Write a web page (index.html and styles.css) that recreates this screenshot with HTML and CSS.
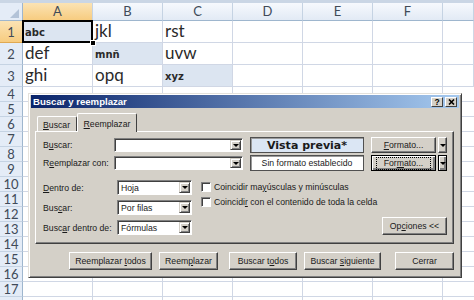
FILE: index.html
```html
<!DOCTYPE html>
<html lang="es">
<head>
    <meta charset="UTF-8">
    <meta name="viewport" content="width=device-width, initial-scale=1.0">
    <title>Buscar y reemplazar</title>
    <link rel="stylesheet" href="styles.css">
</head>
<body>
<div class="sheet">
    <div class="row head">
        <div class="corner"><i class="corner-tri"></i></div>
        <div class="col on">A</div>
        <div class="col">B</div>
        <div class="col">C</div>
        <div class="col">D</div>
        <div class="col">E</div>
        <div class="col">F</div>
        <div class="col rest"></div>
    </div>
    <div class="row tall">
        <div class="num on">1</div>
        <div class="cell fill sel"><span class="bold-cell">abc</span><i class="handle"></i></div>
        <div class="cell">jkl</div>
        <div class="cell">rst</div>
        <div class="cell"></div>
        <div class="cell"></div>
        <div class="cell"></div>
        <div class="cell rest"></div>
    </div>
    <div class="row tall">
        <div class="num">2</div>
        <div class="cell">def</div>
        <div class="cell fill"><span class="bold-cell">mnñ</span></div>
        <div class="cell">uvw</div>
        <div class="cell"></div>
        <div class="cell"></div>
        <div class="cell"></div>
        <div class="cell rest"></div>
    </div>
    <div class="row tall">
        <div class="num">3</div>
        <div class="cell">ghi</div>
        <div class="cell">opq</div>
        <div class="cell fill"><span class="bold-cell">xyz</span></div>
        <div class="cell"></div>
        <div class="cell"></div>
        <div class="cell"></div>
        <div class="cell rest"></div>
    </div>
    <div class="row"><div class="num">4</div><div class="blank"></div></div>
    <div class="row"><div class="num">5</div><div class="blank"></div></div>
    <div class="row"><div class="num">6</div><div class="blank"></div></div>
    <div class="row"><div class="num">7</div><div class="blank"></div></div>
    <div class="row"><div class="num">8</div><div class="blank"></div></div>
    <div class="row"><div class="num">9</div><div class="blank"></div></div>
    <div class="row"><div class="num">10</div><div class="blank"></div></div>
    <div class="row"><div class="num">11</div><div class="blank"></div></div>
    <div class="row"><div class="num">12</div><div class="blank"></div></div>
    <div class="row"><div class="num">13</div><div class="blank"></div></div>
    <div class="row"><div class="num">14</div><div class="blank"></div></div>
    <div class="row"><div class="num">15</div><div class="blank"></div></div>
    <div class="row"><div class="num">16</div><div class="blank"></div></div>
    <div class="row"><div class="num">17</div><div class="blank"></div></div>
    <div class="row"><div class="num"></div><div class="blank"></div></div>
</div>

<div class="dialog">
    <div class="titlebar">
        <span>Buscar y reemplazar</span>
        <div class="tbtns">
            <div class="tbtn">?</div>
            <div class="tbtn">
                <svg width="7" height="6" viewBox="0 0 7 6"><path d="M1 0.5 L6 5.5 M6 0.5 L1 5.5" stroke="#000" stroke-width="1.6"/></svg>
            </div>
        </div>
    </div>

    <div class="tabs">
        <div class="tab"><u>B</u>uscar</div>
        <div class="tab active"><u>R</u>eemplazar</div>
    </div>

    <div class="panel">
        <div class="line">
            <label class="lbl">B<u>u</u>scar:</label>
            <div class="combo wide"><span></span><i class="drop"><i class="tri"></i></i></div>
            <div class="preview">Vista previa*</div>
            <div class="btn fmt"><span><u>F</u>ormato...</span></div>
            <div class="btn arrow"><i class="tri"></i></div>
        </div>
        <div class="line second">
            <label class="lbl">R<u>e</u>emplazar con:</label>
            <div class="combo wide"><span></span><i class="drop"><i class="tri"></i></i></div>
            <div class="preview none">Sin formato establecido</div>
            <div class="btn fmt focus"><span class="dots">For<u>m</u>ato...</span></div>
            <div class="btn arrow focus"><i class="tri"></i></div>
        </div>

        <div class="lower">
            <div class="selects">
                <div class="srow">
                    <label class="slbl"><u>D</u>entro de:</label>
                    <div class="combo pick"><span>Hoja</span><i class="drop"><i class="tri"></i></i></div>
                </div>
                <div class="srow">
                    <label class="slbl">Bus<u>c</u>ar:</label>
                    <div class="combo pick"><span>Por filas</span><i class="drop"><i class="tri"></i></i></div>
                </div>
                <div class="srow">
                    <label class="slbl">Busc<u>a</u>r dentro de:</label>
                    <div class="combo pick"><span>Fórmulas</span><i class="drop"><i class="tri"></i></i></div>
                </div>
            </div>
            <div class="checks">
                <div class="chk"><span class="box"></span><span>Coincidir ma<u>y</u>úsculas y minúsculas</span></div>
                <div class="chk"><span class="box"></span><span>Coincidi<u>r</u> con el contenido de toda la celda</span></div>
            </div>
            <div class="btn opts"><span>Op<u>c</u>iones &lt;&lt;</span></div>
        </div>
    </div>

    <div class="actions">
        <div class="btn b-all"><span>Reemplazar <u>t</u>odos</span></div>
        <div class="btn b-one"><span>Reem<u>p</u>lazar</span></div>
        <div class="btn b-find"><span>Buscar t<u>o</u>dos</span></div>
        <div class="btn b-next"><span>Buscar <u>s</u>iguiente</span></div>
        <div class="btn b-close"><span>Cerrar</span></div>
    </div>
</div>
</body>
</html>
```

FILE: styles.css
```css
body {
    margin: 0;
    width: 474px;
    height: 300px;
    overflow: hidden;
    background: #fff;
    position: relative;
}

/* spreadsheet */
.sheet {
    font-family: Lato, "Liberation Sans", sans-serif;
    color: #2a2a2a;
}

.row {
    display: flex;
    height: 15px;
}

.row.tall {
    height: 22px;
}

.row.head {
    height: 21px;
    border-top: 3px solid #cad6e5;
    box-sizing: border-box;
}

.corner {
    width: 23px;
    flex: none;
    box-sizing: border-box;
    background: #e4ecf7;
    border-right: 1px solid #9eb6ce;
    border-bottom: 1px solid #9eb6ce;
    display: flex;
    justify-content: flex-end;
    align-items: flex-end;
    padding: 0 3px 2px 0;
}

.corner-tri {
    width: 0;
    height: 0;
    border-left: 9px solid transparent;
    border-bottom: 9px solid #b3c3d8;
}

.col {
    width: 70px;
    flex: none;
    box-sizing: border-box;
    background: linear-gradient(#f6f9fd, #e2eaf5);
    border-right: 1px solid #c5d3e3;
    border-bottom: 1px solid #9eb6ce;
    text-align: center;
    font-size: 13px;
    line-height: 17px;
    color: #404a58;
}

.col.on,
.num.on {
    background: linear-gradient(#fbe3b4, #f7cc80);
    border-bottom-color: #e0a952;
}

.col.rest,
.cell.rest {
    flex: 1;
}

.num {
    width: 23px;
    flex: none;
    box-sizing: border-box;
    background: #e4ecf7;
    border-right: 1px solid #9eb6ce;
    border-bottom: 1px solid #c5d3e3;
    display: flex;
    align-items: center;
    justify-content: center;
    font-size: 13px;
    color: #404a58;
}

.cell {
    width: 70px;
    flex: none;
    box-sizing: border-box;
    border-right: 1px solid #d0d7e5;
    border-bottom: 1px solid #d0d7e5;
    display: flex;
    align-items: flex-end;
    padding: 0 2px 1px;
    font-size: 17px;
    line-height: 20px;
    position: relative;
}

.cell.fill {
    background: #dce5f1;
}

.bold-cell {
    font-family: "DejaVu Sans", Verdana, sans-serif;
    font-weight: bold;
    font-size: 10px;
    line-height: 14px;
    padding-bottom: 1px;
}

.sel::after {
    content: "";
    position: absolute;
    left: -1px;
    top: -1px;
    right: -1px;
    bottom: -1px;
    border: 2px solid #000;
}

.handle {
    position: absolute;
    right: -4px;
    bottom: -4px;
    width: 4px;
    height: 4px;
    background: #000;
    border: 1px solid #fff;
    z-index: 2;
}

.blank {
    flex: 1;
    border-bottom: 1px solid #d0d7e5;
    background: repeating-linear-gradient(90deg, transparent 0 69px, #d0d7e5 69px 70px);
}

/* dialog */
.dialog {
    position: absolute;
    left: 28px;
    top: 93px;
    width: 434px;
    height: 185px;
    box-sizing: border-box;
    background: #d4d0c8;
    border: 1px solid;
    border-color: #e4e1db #404040 #404040 #e4e1db;
    box-shadow: inset 1px 1px #fff, inset -1px -1px #808080;
    padding: 1px 2px;
    display: flex;
    flex-direction: column;
    font-family: "Liberation Sans", Arial, sans-serif;
    font-size: 8.7px;
    color: #1a1a1a;
}

.titlebar {
    height: 13px;
    flex: none;
    display: flex;
    align-items: center;
    padding: 0 2px;
    background: linear-gradient(90deg, #0a246a, #a6caf0);
    color: #fff;
    font-weight: bold;
    font-size: 9.6px;
}

.tbtns {
    margin-left: auto;
    display: flex;
    gap: 2px;
}

.tbtn {
    width: 12px;
    height: 10px;
    box-sizing: border-box;
    background: #d4d0c8;
    border: 1px solid;
    border-color: #fff #404040 #404040 #fff;
    display: flex;
    align-items: center;
    justify-content: center;
    color: #000;
    font-size: 8.5px;
    font-weight: bold;
}

.tabs {
    display: flex;
    align-items: flex-end;
    height: 18px;
    margin: 5px 0 0 6px;
}

.tab {
    width: 40px;
    height: 15px;
    box-sizing: border-box;
    border: 1px solid;
    border-color: #fff #404040 transparent #fff;
    border-bottom: none;
    border-radius: 2px 2px 0 0;
    padding: 3px 0 0 5px;
}

.tab.active {
    width: 60px;
    height: 19px;
    margin-bottom: -1px;
    padding: 5px 0 0 0;
    text-align: center;
    background: #d4d0c8;
    position: relative;
    z-index: 1;
}

.panel {
    height: 113px;
    flex: none;
    box-sizing: border-box;
    margin: 0 5px 0 4px;
    border: 1px solid;
    border-color: #fff #404040 #404040 #fff;
    box-shadow: inset -1px -1px #808080;
    padding: 5px 6px 0 7px;
}

.line {
    display: flex;
    align-items: center;
    height: 16px;
}

.line.second {
    margin-top: 2px;
}

.lbl {
    width: 71px;
    flex: none;
}

.combo {
    box-sizing: border-box;
    background: #fff;
    border: 1px solid;
    border-color: #808080 #fff #fff #808080;
    box-shadow: inset 1px 1px #404040;
    padding: 1px;
    display: flex;
    align-items: center;
}

.combo span {
    padding-left: 2px;
}

.combo.wide {
    width: 129px;
    height: 14px;
}

.combo.pick {
    width: 75px;
    height: 15px;
}

.drop {
    margin-left: auto;
    width: 11px;
    height: 100%;
    box-sizing: border-box;
    background: #d4d0c8;
    border: 1px solid;
    border-color: #d4d0c8 #404040 #404040 #d4d0c8;
    box-shadow: inset 1px 1px #fff, inset -1px -1px #808080;
    display: flex;
    align-items: center;
    justify-content: center;
}

.tri {
    width: 0;
    height: 0;
    border-left: 3px solid transparent;
    border-right: 3px solid transparent;
    border-top: 3px solid #000;
}

.preview {
    margin-left: 7px;
    width: 114px;
    height: 16px;
    box-sizing: border-box;
    border: 1px solid #505050;
    box-shadow: inset 1px 1px #9a9a9a;
    background: #dbe6f4;
    display: flex;
    align-items: center;
    justify-content: center;
    font-family: "DejaVu Sans", Verdana, sans-serif;
    font-weight: bold;
    font-size: 11px;
}

.preview.none {
    background: #fff;
    font-family: "Liberation Sans", Arial, sans-serif;
    font-weight: normal;
    font-size: 8.7px;
}

.btn {
    box-sizing: border-box;
    background: #d4d0c8;
    border: 1px solid;
    border-color: #fff #404040 #404040 #fff;
    box-shadow: inset -1px -1px #808080;
    display: flex;
    align-items: center;
    justify-content: center;
    flex: none;
}

.btn.fmt {
    margin-left: 7px;
    width: 65px;
    height: 16px;
}

.btn.arrow {
    margin-left: 2px;
    width: 9px;
    height: 16px;
}

.btn.focus {
    border-color: #000;
    box-shadow: inset 1px 1px #fff, inset -2px -2px #808080;
}

.dots {
    outline: 1px dotted #000;
    outline-offset: 1px;
    padding: 0 6px;
    line-height: 9px;
}

.lower {
    display: flex;
    margin-top: 9px;
}

.selects {
    display: flex;
    flex-direction: column;
    gap: 5px;
}

.srow {
    display: flex;
    align-items: center;
    height: 15px;
}

.slbl {
    width: 74px;
    flex: none;
}

.checks {
    margin-left: 9px;
    padding-top: 2px;
    display: flex;
    flex-direction: column;
    gap: 5px;
}

.chk {
    display: flex;
    align-items: center;
    height: 10px;
}

.box {
    width: 10px;
    height: 10px;
    box-sizing: border-box;
    background: #fff;
    border: 1px solid;
    border-color: #808080 #fff #fff #808080;
    box-shadow: inset 1px 1px #404040;
    margin-right: 3px;
}

.btn.opts {
    margin-left: auto;
    align-self: flex-end;
    width: 65px;
    height: 18px;
}

.actions {
    display: flex;
    justify-content: flex-end;
    margin: 8px 5px 0 0;
}

.actions .btn {
    height: 18px;
}

.b-all { width: 83px; }
.b-one { width: 59px; margin-left: 7px; }
.b-find { width: 68px; margin-left: 11px; }
.b-next { width: 77px; margin-left: 7px; }
.b-close { width: 59px; margin-left: 14px; }
```
